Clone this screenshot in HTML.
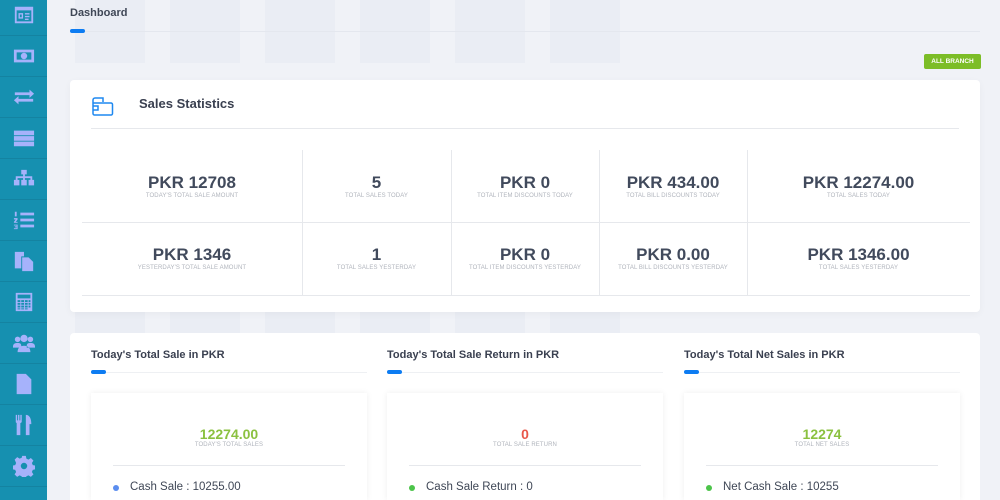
<!DOCTYPE html>
<html><head><style>
*{margin:0;padding:0;box-sizing:border-box}
html,body{width:1000px;height:500px;overflow:hidden}
body{background:#f0f2f7;font-family:"Liberation Sans",sans-serif;position:relative;color:#3f4756}
.sb{position:absolute;left:0;top:0;width:47px;height:500px;background:#1690b0}
.sb div{position:absolute;left:0;width:47px;height:41px;border-bottom:1px solid #1483a1;display:flex;align-items:center;justify-content:center}
.sb svg{width:22px;height:22px;fill:#a6b2fb}
.ph{position:absolute;background:#eaedf4}
.a{position:absolute}
.card{position:absolute;background:#fff;border-radius:4px}
.v{position:absolute;text-align:center;font-weight:bold;font-size:17px;color:#414a5c}
.l{position:absolute;text-align:center;font-size:6px;color:#b0b4bc;letter-spacing:.1px}
.vl{position:absolute;width:1px;background:#e6e8ec}
.hl{position:absolute;height:1px;background:#e6e8ec}
.t{position:absolute;font-size:12px;font-weight:bold;color:#3a4050}
.bar{position:absolute;width:15px;height:4px;border-radius:2px;background:#0d7cf2}
.in{position:absolute;background:#fff;box-shadow:0 0 6px rgba(0,0,0,.07);height:107px;width:276px;top:393px}
.dot{position:absolute;width:6px;height:6px;border-radius:3px}
.li{position:absolute;font-size:11.5px;color:#3f4756}
</style></head><body>
<div class="ph" style="left:75px;top:0;width:70px;height:63px"></div>
<div class="ph" style="left:170px;top:0;width:70px;height:63px"></div>
<div class="ph" style="left:265px;top:0;width:70px;height:63px"></div>
<div class="ph" style="left:360px;top:0;width:70px;height:63px"></div>
<div class="ph" style="left:455px;top:0;width:70px;height:63px"></div>
<div class="ph" style="left:550px;top:0;width:70px;height:63px"></div>
<div class="ph" style="left:75px;top:300px;width:70px;height:33px"></div>
<div class="ph" style="left:170px;top:300px;width:70px;height:33px"></div>
<div class="ph" style="left:265px;top:300px;width:70px;height:33px"></div>
<div class="ph" style="left:360px;top:300px;width:70px;height:33px"></div>
<div class="ph" style="left:455px;top:300px;width:70px;height:33px"></div>
<div class="ph" style="left:550px;top:300px;width:70px;height:33px"></div>
<div class="sb">
<div style="top:-5px"><svg viewBox="0 0 24 24"><path d="M2 3h20v18H2zM4 7v12h16V7zM6 10h5v6H6zM7.5 11.5v3h2v-3zM13 10h5v1.5h-5zM13 13h5v1.5h-5zM13 16h4v1.5h-4z" fill-rule="evenodd"/></svg></div>
<div style="top:36px"><svg viewBox="0 0 24 24"><path d="M1 5h22v14H1zM4 8v8h16V8zM12 8.5a3.5 3.5 0 1 1 0 7a3.5 3.5 0 1 1 0-7z" fill-rule="evenodd"/></svg></div>
<div style="top:77px"><svg viewBox="0 0 24 24"><path d="M2 7h16V4l5 4.5-5 4.5v-3H2zM22 14H6v-3l-5 4.5L6 20v-3h16z"/></svg></div>
<div style="top:118px"><svg viewBox="0 0 24 24"><path d="M1 4h22v5H1zM1 10h22v5H1zM1 16h22v5H1z"/></svg></div>
<div style="top:159px"><svg viewBox="0 0 24 24"><path d="M9 2h6v5h-2v2h8v4h2v6h-6v-6h2v-2h-6v2h2v6H9v-6h2v-2H5v2h2v6H1v-6h2V9h8V7H9z"/></svg></div>
<div style="top:200px"><svg viewBox="0 0 24 24"><path d="M8 4h15v3H8zM8 10.5h15v3H8zM8 17h15v3H8zM2 3h2v5H2zM1 10h4v1.5L3 14h2v1H1v-1l2-2.5H1zM1 17h4v5H1v-1h3v-1H2v-1h2v-1H1z"/></svg></div>
<div style="top:241px"><svg viewBox="0 0 24 24"><path d="M2 2h10v5h-3v13H2zM10 8h7l5 5v10H10z"/></svg></div>
<div style="top:282px"><svg viewBox="0 0 24 24"><path d="M3 2h18v20H3zM5 4v4h14V4zM5 10h3v2H5zM9 10h3v2H9zM13 10h3v2h-3zM17 10h2v2h-2zM5 13h3v2H5zM9 13h3v2H9zM13 13h3v2h-3zM17 13h2v2h-2zM5 16h3v2H5zM9 16h3v2H9zM13 16h3v2h-3zM17 16h2v2h-2zM5 19h3v1H5zM9 19h3v1H9zM13 19h3v1h-3z" fill-rule="evenodd"/></svg></div>
<div style="top:323px"><svg viewBox="0 0 24 24"><circle cx="5" cy="8" r="3"/><circle cx="19" cy="8" r="3"/><circle cx="12" cy="7" r="4"/><path d="M0 16c0-3 2-4 5-4s4 1 4 3v2H0zM24 16c0-3-2-4-5-4s-4 1-4 3v2h9zM5 22c0-5 3-7 7-7s7 2 7 7z"/></svg></div>
<div style="top:364px"><svg viewBox="0 0 24 24"><path d="M4 1h10l6 6v16H4z"/></svg></div>
<div style="top:405px"><svg viewBox="0 0 24 24"><path d="M3 1h1.5v6h1V1H7v6h1V1h1.5v8L8 10v13H4V10L3 9zM14 1c4 0 6 4 6 10h-2v12h-4z"/></svg></div>
<div style="top:446px"><svg viewBox="0 0 24 24"><path d="M10 1h4l.6 3 2.3 1 2.6-1.7 2.8 2.8-1.7 2.6 1 2.3 3 .6v4l-3 .6-1 2.3 1.7 2.6-2.8 2.8-2.6-1.7-2.3 1-.6 3h-4l-.6-3-2.3-1-2.6 1.7-2.8-2.8 1.7-2.6-1-2.3-3-.6v-4l3-.6 1-2.3L1.8 5.1 4.6 2.3l2.6 1.7 2.3-1zM12 8.5a3.5 3.5 0 1 0 0 7a3.5 3.5 0 1 0 0-7z" fill-rule="evenodd"/></svg></div>
</div>
<div class="a" style="left:70px;top:7px;font-size:11px;font-weight:bold;color:#3f4756">Dashboard</div>
<div class="hl" style="left:70px;top:31px;width:910px;background:#e4e7ee"></div>
<div class="bar" style="left:70px;top:29px"></div>
<div class="a" style="left:924px;top:54px;width:57px;height:15px;background:#7cbd27;border-radius:2px;color:#fff;font-size:6.5px;font-weight:bold;text-align:center;line-height:15px">ALL BRANCH</div>

<div class="card" style="left:70px;top:80px;width:910px;height:232px;box-shadow:0 2px 8px rgba(0,0,0,.04)"></div>
<svg class="a" style="left:91px;top:95px" width="23" height="21" viewBox="0 0 23 21"><path d="M2 8 V5 a2 2 0 0 1 2-2 h8 v4 M2 8 h18 a1.5 1.5 0 0 1 1.5 1.5 v9 a1.5 1.5 0 0 1-1.5 1.5 H3.5 A1.5 1.5 0 0 1 2 18.5 Z M2 11 h5 v4 H2" fill="none" stroke="#1e88f0" stroke-width="1.5"/></svg>
<div class="a" style="left:139px;top:96px;font-size:13px;font-weight:bold;color:#3a4050">Sales Statistics</div>
<div class="hl" style="left:91px;top:128px;width:868px"></div>
<div class="hl" style="left:82px;top:222px;width:888px"></div>
<div class="hl" style="left:82px;top:295px;width:888px"></div>
<div class="vl" style="left:302px;top:150px;height:145px"></div>
<div class="vl" style="left:451px;top:150px;height:145px"></div>
<div class="vl" style="left:599px;top:150px;height:145px"></div>
<div class="vl" style="left:747px;top:150px;height:145px"></div>

<div class="v" style="left:82px;width:220px;top:173px">PKR 12708</div><div class="l" style="left:82px;width:220px;top:193px">TODAY'S TOTAL SALE AMOUNT</div>
<div class="v" style="left:302px;width:149px;top:173px">5</div><div class="l" style="left:302px;width:149px;top:193px">TOTAL SALES TODAY</div>
<div class="v" style="left:451px;width:148px;top:173px">PKR 0</div><div class="l" style="left:451px;width:148px;top:193px">TOTAL ITEM DISCOUNTS TODAY</div>
<div class="v" style="left:599px;width:148px;top:173px">PKR 434.00</div><div class="l" style="left:599px;width:148px;top:193px">TOTAL BILL DISCOUNTS TODAY</div>
<div class="v" style="left:747px;width:223px;top:173px">PKR 12274.00</div><div class="l" style="left:747px;width:223px;top:193px">TOTAL SALES TODAY</div>

<div class="v" style="left:82px;width:220px;top:245px">PKR 1346</div><div class="l" style="left:82px;width:220px;top:265px">YESTERDAY'S TOTAL SALE AMOUNT</div>
<div class="v" style="left:302px;width:149px;top:245px">1</div><div class="l" style="left:302px;width:149px;top:265px">TOTAL SALES YESTERDAY</div>
<div class="v" style="left:451px;width:148px;top:245px">PKR 0</div><div class="l" style="left:451px;width:148px;top:265px">TOTAL ITEM DISCOUNTS YESTERDAY</div>
<div class="v" style="left:599px;width:148px;top:245px">PKR 0.00</div><div class="l" style="left:599px;width:148px;top:265px">TOTAL BILL DISCOUNTS YESTERDAY</div>
<div class="v" style="left:747px;width:223px;top:245px">PKR 1346.00</div><div class="l" style="left:747px;width:223px;top:265px">TOTAL SALES YESTERDAY</div>

<div class="card" style="left:70px;top:333px;width:910px;height:167px;border-radius:4px 4px 0 0"></div>
<div class="t" style="left:91px;top:349px;font-size:11px">Today's Total Sale in PKR</div>
<div class="t" style="left:387px;top:349px;font-size:11px">Today's Total Sale Return in PKR</div>
<div class="t" style="left:684px;top:349px;font-size:11px">Today's Total Net Sales in PKR</div>
<div class="hl" style="left:91px;top:372px;width:276px;background:#eef0f3"></div>
<div class="hl" style="left:387px;top:372px;width:276px;background:#eef0f3"></div>
<div class="hl" style="left:684px;top:372px;width:276px;background:#eef0f3"></div>
<div class="bar" style="left:91px;top:370px"></div>
<div class="bar" style="left:387px;top:370px"></div>
<div class="bar" style="left:684px;top:370px"></div>

<div class="in" style="left:91px"></div>
<div class="in" style="left:387px"></div>
<div class="in" style="left:684px"></div>
<div class="v" style="left:91px;width:276px;top:426px;font-size:14px;color:#8bc140">12274.00</div>
<div class="l" style="left:91px;width:276px;top:442px">TODAY'S TOTAL SALES</div>
<div class="v" style="left:387px;width:276px;top:426px;font-size:14px;color:#e8574a">0</div>
<div class="l" style="left:387px;width:276px;top:442px">TOTAL SALE RETURN</div>
<div class="v" style="left:684px;width:276px;top:426px;font-size:14px;color:#8bc140">12274</div>
<div class="l" style="left:684px;width:276px;top:442px">TOTAL NET SALES</div>
<div class="hl" style="left:113px;top:465px;width:232px"></div>
<div class="hl" style="left:409px;top:465px;width:232px"></div>
<div class="hl" style="left:706px;top:465px;width:232px"></div>
<div class="dot" style="left:113px;top:485px;background:#5b8def"></div>
<div class="li" style="left:130px;top:481px">Cash Sale : 10255.00</div>
<div class="dot" style="left:409px;top:485px;background:#4cc44a"></div>
<div class="li" style="left:426px;top:481px">Cash Sale Return : 0</div>
<div class="dot" style="left:706px;top:485px;background:#4cc44a"></div>
<div class="li" style="left:723px;top:481px">Net Cash Sale : 10255</div>
</body></html>
